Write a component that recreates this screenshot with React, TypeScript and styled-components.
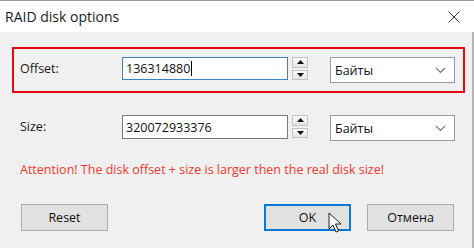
import React from "react";
import styled, { createGlobalStyle } from "styled-components";

const Global = createGlobalStyle`
  html, body { margin: 0; padding: 0; background: #f0f0f0; }
  * { box-sizing: border-box; }
  body { font-family: "Open Sans", "Noto Sans", sans-serif; }
`;

const Window = styled.div`
  position: relative;
  width: 474px;
  height: 248px;
  display: flex;
  flex-direction: column;
  border-top: 1px solid #9a9a9a;
  background: #f0f0f0;
  overflow: hidden;
`;

const TitleBar = styled.div`
  height: 31px;
  flex: none;
  background: #ffffff;
  display: flex;
  align-items: center;
  justify-content: space-between;
  padding: 0 14px 0 5px;
  font-size: 14px;
  color: #1a1a1a;
`;

const Body = styled.div`
  flex: 1;
  display: flex;
  flex-direction: column;
  padding: 15px 0 0 12px;
  border-right: 2px solid #b4b4b4;
`;

const Highlight = styled.div`
  width: 453px;
  height: 46px;
  border: 2px solid #e50914;
  padding: 8px 0 0 6px;
`;

const Row = styled.div<{ $indent?: number }>`
  display: flex;
  align-items: flex-start;
  padding-left: ${(p) => p.$indent ?? 0}px;
`;

const Label = styled.div`
  width: 102px;
  height: 23px;
  line-height: 23px;
  font-size: 12.5px;
  color: #1a1a1a;
`;

const Field = styled.div<{ $focused?: boolean; $h: number }>`
  width: 166px;
  height: ${(p) => p.$h}px;
  background: #fff;
  border: 1px solid ${(p) => (p.$focused ? "#3d84c6" : "#7a7a7a")};
  display: flex;
  align-items: center;
  padding-left: 3px;
  font-size: 12.5px;
  color: #111;
`;

const Caret = styled.span`
  display: inline-block;
  width: 1px;
  height: 15px;
  background: #000;
  margin-left: 1px;
`;

const Spinner = styled.div`
  width: 16px;
  margin-left: 4px;
  display: flex;
  flex-direction: column;
  gap: 2px;
`;

const SpinButton = styled.div`
  height: 10.5px;
  border: 1px solid #c4c4c4;
  background: linear-gradient(#fafafa, #e6e6e6);
  display: flex;
  align-items: center;
  justify-content: center;
`;

const Combo = styled.div<{ $h: number }>`
  width: 125px;
  height: ${(p) => p.$h}px;
  margin-left: 22px;
  background: #fff;
  border: 1px solid #9a9a9a;
  display: flex;
  align-items: center;
  justify-content: space-between;
  padding: 0 8px 0 4px;
  font-size: 12.5px;
  color: #111;
`;

const SizeRow = styled(Row)`
  margin-top: 22px;
`;

const Warning = styled.div`
  margin-top: 21px;
  padding-left: 8px;
  font-size: 12.5px;
  color: #f2382c;
  line-height: 16px;
`;

const Buttons = styled.div`
  margin-top: 26px;
  display: flex;
  padding-left: 9px;
`;

const Button = styled.div<{ $default?: boolean; $gap?: number }>`
  width: 87px;
  height: 27px;
  margin-left: ${(p) => p.$gap ?? 0}px;
  background: #e1e1e1;
  border: ${(p) => (p.$default ? "2px solid #0a78d4" : "1px solid #adadad")};
  display: flex;
  align-items: center;
  justify-content: center;
  font-size: 12.5px;
  color: #111;
`;

const Cursor = styled.svg`
  position: absolute;
  left: 328px;
  top: 211px;
`;

const Tri = ({ up }: { up?: boolean }) => (
  <svg width="7" height="4" viewBox="0 0 7 4">
    <path d={up ? "M0 4 L3.5 0 L7 4 Z" : "M0 0 L3.5 4 L7 0 Z"} fill="#111" />
  </svg>
);

const Chevron = () => (
  <svg width="11" height="7" viewBox="0 0 11 7">
    <path d="M1 1 L5.5 5.5 L10 1" stroke="#777" strokeWidth="1.2" fill="none" />
  </svg>
);

const Close = () => (
  <svg width="12" height="12" viewBox="0 0 12 12">
    <path d="M0.5 0.5 L11.5 11.5 M11.5 0.5 L0.5 11.5" stroke="#333" strokeWidth="1" />
  </svg>
);

const SpinBox = () => (
  <Spinner>
    <SpinButton><Tri up /></SpinButton>
    <SpinButton><Tri /></SpinButton>
  </Spinner>
);

export default function App() {
  return (
    <>
      <Global />
      <Window>
        <TitleBar>
          <span>RAID disk options</span>
          <Close />
        </TitleBar>
        <Body>
          <Highlight>
            <Row>
              <Label>Offset:</Label>
              <Field $focused $h={23}>
                136314880<Caret />
              </Field>
              <SpinBox />
              <Combo $h={26}>
                <span>Байты</span>
                <Chevron />
              </Combo>
            </Row>
          </Highlight>
          <SizeRow $indent={8}>
            <Label>Size:</Label>
            <Field $h={24}>320072933376</Field>
            <SpinBox />
            <Combo $h={26}>
              <span>Байты</span>
              <Chevron />
            </Combo>
          </SizeRow>
          <Warning>Attention! The disk offset + size is larger then the real disk size!</Warning>
          <Buttons>
            <Button>Reset</Button>
            <Button $default $gap={156}>OK</Button>
            <Button $gap={16}>Отмена</Button>
          </Buttons>
        </Body>
        <Cursor width="14" height="22" viewBox="0 0 14 22">
          <path d="M1 1 L1 17 L5 13 L8 20 L10.5 19 L7.5 12 L13 12 Z" fill="#fff" stroke="#222" strokeWidth="1" strokeLinejoin="round" />
        </Cursor>
      </Window>
    </>
  );
}
